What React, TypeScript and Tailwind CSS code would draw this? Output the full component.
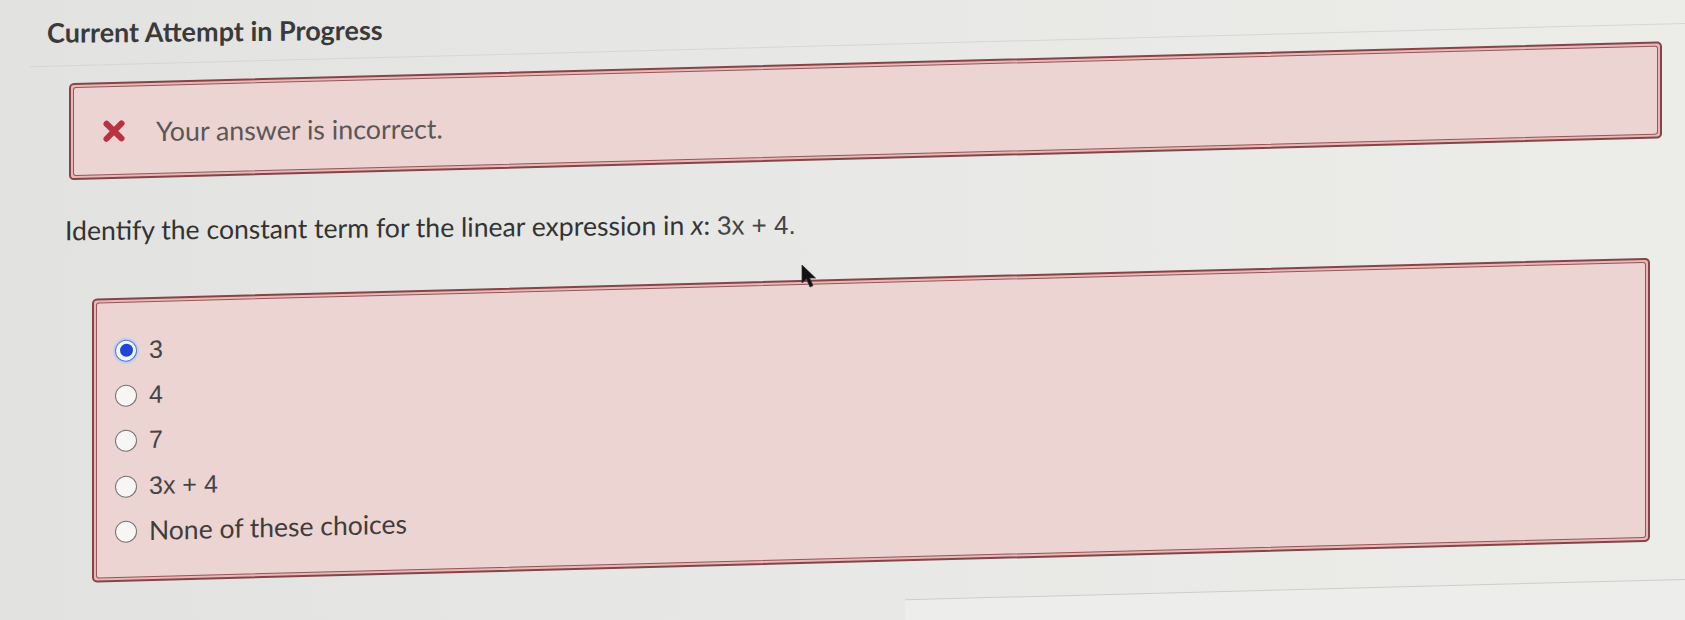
import React from "react";

function Radio({ checked }: { checked?: boolean }) {
  if (checked) {
    return (
      <span className="flex h-[22px] w-[22px] items-center justify-center rounded-full border-[1.5px] border-[#5b78c9] bg-[#f4f6fb] shadow-[0_0_0_2px_#c3cff0]">
        <span className="h-[13px] w-[13px] rounded-full bg-[#1d47d4]" />
      </span>
    );
  }
  return <span className="h-[22px] w-[22px] rounded-full border-[1.8px] border-[#777373] bg-[#f8f6f5]" />;
}

function FramedBox({ className, children }: { className: string; children: React.ReactNode }) {
  return (
    <div className={"rounded-[5px] border-2 border-[#844549] bg-[#e8b7b6] p-[2px] " + className}>
      <div className="h-full rounded-[3px] border border-[#95555a] bg-[#ebd4d1]">{children}</div>
    </div>
  );
}

export default function App() {
  const options: { label: string; math?: boolean; checked?: boolean }[] = [
    { label: "3", math: true, checked: true },
    { label: "4", math: true },
    { label: "7", math: true },
    { label: "3x + 4", math: true },
    { label: "None of these choices" },
  ];
  return (
    <div className="relative h-[620px] w-[1685px] overflow-hidden bg-linear-to-r from-[#e2e2e0] via-[#e8e8e6] to-[#ecece9] font-['Lato','Open_Sans',sans-serif]">
      <div className="h-full origin-left -skew-y-[1.5deg]">
        <div className="pl-[47px] pt-[17px]">
          <div className="inline-block origin-left skew-y-[1deg] text-[27px] font-bold leading-[34px] text-[#3a3a3a]">
            Current Attempt in Progress
          </div>
        </div>
        <div className="ml-[30px] mt-[16px] border-t border-[#d6d6d4]" />
        <FramedBox className="ml-[69px] mt-[17px] h-[97px] w-[1593px]">
          <div className="flex h-full items-center">
            <svg className="ml-[27px]" width="26" height="26" viewBox="0 0 26 26">
              <path d="M5.5 5.5 L20.5 20.5 M20.5 5.5 L5.5 20.5" stroke="#b8323f" strokeWidth="6" strokeLinecap="round" />
            </svg>
            <span className="ml-[29px] inline-block origin-left skew-y-[1deg] pt-[3px] text-[26.8px] leading-[34px] text-[#5b5658]">
              Your answer is incorrect.
            </span>
          </div>
        </FramedBox>
        <div className="ml-[65px] mt-[33px]">
          <div className="inline-block origin-left skew-y-[1deg] text-[26.6px] leading-[34px] text-[#333]">
            Identify the constant term for the linear expression in <i>x</i>:{" "}
            <span className="font-['Liberation_Sans',sans-serif] text-[26px] text-[#444]">3x + 4.</span>
          </div>
        </div>
        <FramedBox className="ml-[92px] mt-[51px] h-[284px] w-[1558px]">
          <div className="flex flex-col pt-[25px]">
            {options.map((o) => (
              <div key={o.label} className="flex h-[45.3px] items-center">
                <span className="ml-[18px] flex w-[22px] justify-center">
                  <Radio checked={o.checked} />
                </span>
                <span
                  className={
                    o.math
                      ? "ml-[12px] font-['Liberation_Sans',sans-serif] text-[25px] text-[#444]"
                      : "ml-[12px] text-[26.5px] text-[#3d3d3d]"
                  }
                >
                  {o.label}
                </span>
              </div>
            ))}
          </div>
        </FramedBox>
        <div className="ml-[905px] mt-[38px] h-[40px] border-t border-[#cdcdcb] bg-[#ededeb]" />
      </div>
      <svg className="absolute left-[801px] top-[264px]" width="18" height="26" viewBox="0 0 18 26">
        <path d="M1 1 L1 19 L5.5 15 L9 23 L12 21.6 L8.6 14 L14.5 14 Z" fill="#111" stroke="#333" strokeWidth="0.8" />
      </svg>
    </div>
  );
}
